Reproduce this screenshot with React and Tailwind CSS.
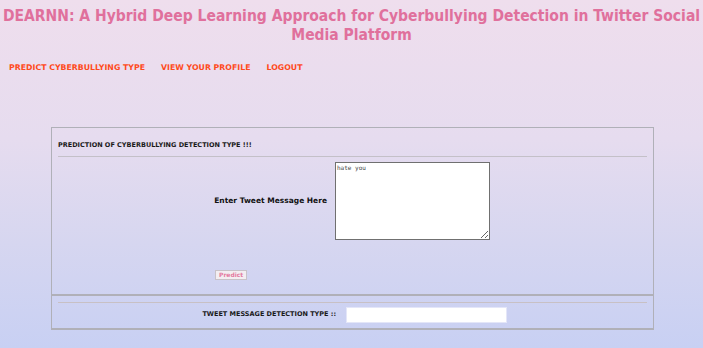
export default function App() {
  return (
    <div className="min-h-[348px] w-full bg-[linear-gradient(180deg,#efdeed_0%,#e6dcef_40%,#d6d6f0_70%,#c8d0f3_100%)] [font-family:'DejaVu_Sans_Condensed','DejaVu_Sans',sans-serif] overflow-hidden">
      <h1 className="pt-[7px] text-center text-[15.5px] leading-[19px] font-bold text-[#e0709c] [font-family:'DejaVu_Sans_Condensed',sans-serif] whitespace-nowrap">
        DEARNN: A Hybrid Deep Learning Approach for Cyberbullying Detection in Twitter Social
        <br />
        Media Platform
      </h1>
      <nav className="mt-[18px] flex gap-[16px] pl-[9px] text-[7.8px] leading-[10px] font-bold text-[#ff4a1c] [font-family:'DejaVu_Sans',sans-serif]">
        <span>PREDICT CYBERBULLYING TYPE</span>
        <span>VIEW YOUR PROFILE</span>
        <span>LOGOUT</span>
      </nav>
      <div className="mt-[54px] ml-[51px] w-[603px]">
        <div className="border border-[#b0b0b8] border-b-2 h-[169px] px-[6px] flex flex-col">
          <div className="pt-[13px] pb-[7px] text-[6.5px] leading-[8px] font-bold text-[#1a1a1a] [font-family:'DejaVu_Sans',sans-serif]">
            PREDICTION OF CYBERBULLYING DETECTION TYPE !!!
          </div>
          <div className="h-px bg-[#c4c0c8]" />
          <div className="flex mt-[5px] h-[78px]">
            <div className="w-[277px] flex items-center justify-end pr-[8px] h-[78px]">
              <span className="text-[7.5px] font-bold text-[#111] [font-family:'DejaVu_Sans',sans-serif]">Enter Tweet Message Here</span>
            </div>
            <textarea
              defaultValue="hate you"
              className="block w-[155px] h-[78px] bg-white border border-[#707070] text-[6px] leading-[8px] p-[1px] text-[#444] [font-family:'DejaVu_Sans_Mono',monospace] resize-y"
            />
          </div>
          <div className="mt-[30px] ml-[157px] flex">
            <button className="block h-[10px] px-[3px] bg-[#f3eef2] border border-[#c8c2c8] text-[6px] leading-[8px] font-bold text-[#e47aa0] [font-family:'DejaVu_Sans',sans-serif]">
              Predict
            </button>
          </div>
        </div>
        <div className="border border-t-0 border-[#b0b0b8] border-b-2 h-[34px] px-[6px]">
          <div className="pt-[6px]" />
          <div className="h-px bg-[#c8c0c4]" />
          <div className="flex items-center mt-[4px]">
            <div className="w-[288px] flex justify-end pr-[10px]">
              <span className="text-[6.5px] font-bold text-[#1a1a1a] [font-family:'DejaVu_Sans',sans-serif]">TWEET MESSAGE DETECTION TYPE ::</span>
            </div>
            <input className="w-[161px] h-[16px] bg-white border border-[#e4e6f8]" />
          </div>
        </div>
      </div>
    </div>
  );
}
